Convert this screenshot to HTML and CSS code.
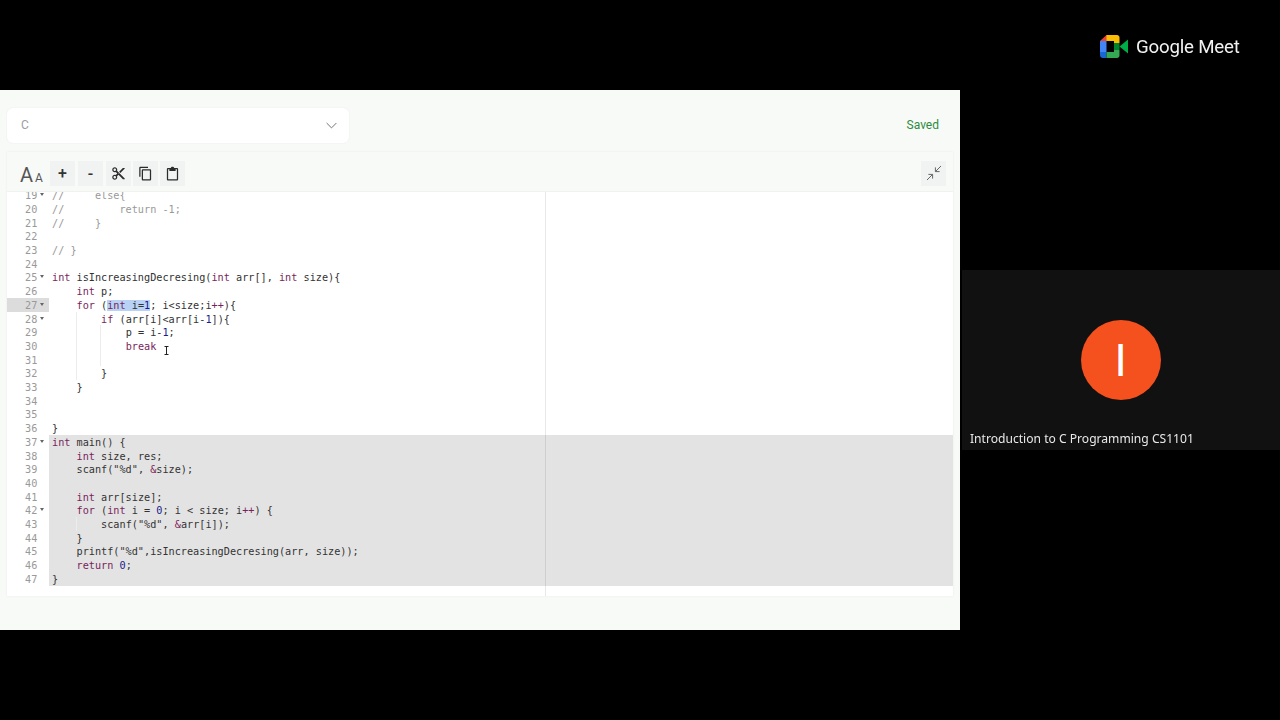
FILE: index.html
```html
<!DOCTYPE html>
<html lang="en">
<head>
<meta charset="utf-8">
<title>Google Meet</title>
<link rel="stylesheet" href="styles.css">
</head>
<body>
<div class="stage">
  <main class="left">
    <div class="sheet">
      <div class="topbar">
        <div class="select"><span>C</span>
          <svg class="chev" width="11" height="7" viewBox="0 0 11 7"><path d="M.6 1l4.900 4.900L10.400 1" fill="none" stroke="#70757a" stroke-width="1"/></svg>
        </div>
        <div class="saved">Saved</div>
      </div>
      <div class="editor">
        <div class="toolbar">
          <div class="aa"><span class="big">A</span><span class="small">A</span></div>
          <button class="tool tool-join">+</button>
          <button class="tool tool-minus">-</button>
          <button class="tool"><svg width="15" height="15" viewBox="0 0 24 24"><path fill="#2b2b2b" d="M9.640 7.640c.23-.5.36-1.050.36-1.640 0-2.210-1.790-4-4-4S2 3.790 2 6s1.790 4 4 4c.59 0 1.140-.13 1.640-.36L10 12l-2.360 2.360C7.140 14.130 6.590 14 6 14c-2.210 0-4 1.790-4 4s1.790 4 4 4 4-1.790 4-4c0-.59-.13-1.140-.36-1.640L12 14l7 7h3v-1L9.640 7.640zM6 8c-1.100 0-2-.89-2-2s.9-2 2-2 2 .89 2 2-.9 2-2 2zm0 12c-1.100 0-2-.89-2-2s.9-2 2-2 2 .89 2 2-.9 2-2 2zm6-7.500c-.28 0-.5-.22-.5-.5s.22-.5.5-.5.5.22.5.5-.22.5-.5.5zM19 3l-6 6 2 2 7-7V3h-3z"/></svg></button>
          <button class="tool"><svg width="15" height="15" viewBox="0 0 24 24"><path fill="#2b2b2b" d="M16 1H4c-1.100 0-2 .9-2 2v14h2V3h12V1zm3 4H8c-1.100 0-2 .9-2 2v14c0 1.100.9 2 2 2h11c1.100 0 2-.9 2-2V7c0-1.100-.9-2-2-2zm0 16H8V7h11v14z"/></svg></button>
          <button class="tool"><svg width="15" height="15" viewBox="0 0 24 24"><path fill="#2b2b2b" d="M19 3h-4.180C14.400 1.840 13.300 1 12 1s-2.400.84-2.820 2H5c-1.100 0-2 .9-2 2v16c0 1.100.9 2 2 2h14c1.100 0 2-.9 2-2V5c0-1.100-.9-2-2-2zm0 18H5V5h2v3h10V5h2v16z"/></svg></button>
          <button class="tool tool-end"><svg width="18" height="18" viewBox="0 0 18 18"><path d="M16 2l-5.600 5.600M10.400 3.400v4.200h4.200M2 16l5.600-5.600M7.600 14.600v-4.200H3.400" fill="none" stroke="#666" stroke-width="1"/></svg></button>
        </div>
        <div class="code">
          <div class="gutter">
            <div class="g fold">19</div><div class="g">20</div><div class="g">21</div><div class="g">22</div><div class="g">23</div><div class="g">24</div><div class="g fold">25</div><div class="g">26</div><div class="g fold active">27</div><div class="g fold">28</div><div class="g">29</div><div class="g">30</div><div class="g">31</div><div class="g">32</div><div class="g">33</div><div class="g">34</div><div class="g">35</div><div class="g">36</div><div class="g fold">37</div><div class="g">38</div><div class="g">39</div><div class="g">40</div><div class="g">41</div><div class="g fold">42</div><div class="g">43</div><div class="g">44</div><div class="g">45</div><div class="g">46</div><div class="g">47</div>
          </div>
          <div class="lines">
            <div class="margin"></div>
            <div class="l c">//     else{</div>
            <div class="l c">//         return -1;</div>
            <div class="l c">//     }</div>
            <div class="l"></div>
            <div class="l c">// }</div>
            <div class="l"></div>
            <div class="l"><b>int</b> isIncreasingDecresing(<b>int</b> arr[], <b>int</b> size){</div>
            <div class="l">    <b>int</b> p;</div>
            <div class="l">    <b>for</b> (<span class="sel"><b>int</b> i=<i>1</i></span>; i&lt;size;i<b>++</b>){</div>
            <div class="l">    <span class="ind">    </span><b>if</b> (arr[i]&lt;arr[i-<i>1</i>]){</div>
            <div class="l">    <span class="ind">    </span><span class="ind">    </span>p = i-<i>1</i>;</div>
            <div class="l">    <span class="ind">    </span><span class="ind">    </span><b>break</b> </div>
            <div class="l">    <span class="ind">    </span><span class="ind">    </span></div>
            <div class="l">    <span class="ind">    </span>}</div>
            <div class="l">    }</div>
            <div class="l"></div>
            <div class="l"></div>
            <div class="l">}</div>
            <div class="l hl"><b>int</b> main() {</div>
            <div class="l hl">    <b>int</b> size, res;</div>
            <div class="l hl">    scanf(<u>"%d"</u>, <b>&amp;</b>size);</div>
            <div class="l hl"></div>
            <div class="l hl">    <b>int</b> arr[size];</div>
            <div class="l hl">    <b>for</b> (<b>int</b> i = <i>0</i>; i &lt; size; i<b>++</b>) {</div>
            <div class="l hl">    <span class="ind">    </span>scanf(<u>"%d"</u>, <b>&amp;</b>arr[i]);</div>
            <div class="l hl">    }</div>
            <div class="l hl">    printf(<u>"%d"</u>,isIncreasingDecresing(arr, size));</div>
            <div class="l hl">    <b>return</b> <i>0</i>;</div>
            <div class="l hl">}</div>
            <svg class="cursor" width="5" height="9" viewBox="0 0 5 9"><path d="M.5 .5h4M.5 8.500h4M2.500 .5v8" stroke="#222" stroke-width="1" fill="none"/></svg>
          </div>
        </div>
      </div>
    </div>
  </main>
  <aside class="right">
    <div class="brand">
      <svg class="logo" width="28" height="23" viewBox="0 0 28 23">
        <path fill="#ea4335" d="M6.500 0H13v6H0z"/>
        <path fill="#4285f4" d="M0 6h6.500v11H0z"/>
        <path fill="#1967d2" d="M0 17h6.500v6H3c-1.700 0-3-1.300-3-3z"/>
        <path fill="#fbbc04" d="M6.500 0H17c1.400 0 2.500 1.100 2.500 2.500V8L14 8V6H6.500z"/>
        <path fill="#34a853" d="M6.500 17H14v-2l5.500 0v5.500c0 1.400-1.100 2.500-2.500 2.500H6.500z"/>
        <path fill="#00832d" d="M14 8h5.500v7H14z"/>
        <path fill="#00ac47" d="M19.500 11.500l8.500-7v14z"/>
      </svg>
      <span class="wordmark">Google Meet</span>
    </div>
    <div class="tile">
      <div class="avatar"><span>I</span></div>
      <div class="name">Introduction to C Programming CS1101</div>
    </div>
  </aside>
</div>
</body>
</html>
```
FILE: styles.css
```css
* { box-sizing: border-box; }
html, body { margin: 0; height: 100%; background: #000; overflow: hidden; }
.stage { display: flex; width: 1280px; height: 720px; filter: blur(.35px); }
.left { width: 960px; height: 720px; padding-top: 90px; flex: none; }
.sheet { height: 540px; background: #f8faf8; padding: 17px 7px 0 7px; display: flex; flex-direction: column; }
.topbar { display: flex; align-items: center; justify-content: space-between; height: 36px; }
.select { width: 342px; height: 35px; background: #fff; border-radius: 6px; box-shadow: 0 0 2px rgba(0,0,0,.07); display: flex; align-items: center; justify-content: space-between; padding: 0 12px 0 14px; font: 12px Roboto, sans-serif; color: #9aa0a0; }
.saved { font: 12px Roboto, sans-serif; color: #2e8b3d; padding-right: 14px; }
.editor { margin-top: 9px; width: 946px; height: 444px; background: #fff; box-shadow: 0 0 2px rgba(0,0,0,.07); display: flex; flex-direction: column; }
.toolbar { height: 40px; flex: none; background: #f8faf8; border-bottom: 1px solid #f0f2f0; display: flex; align-items: center; padding: 3px 7px 0 14px; gap: 2px; }
.aa { width: 27px; color: #555; font-family: Roboto, sans-serif; display: flex; align-items: baseline; padding-top: 3px; margin-left: -1px; margin-right: 1px; }
.big { font-size: 20px; }
.small { font-size: 12px; margin-left: 2px; }
.tool { width: 25px; height: 25px; border: 0; padding: 0; background: #f0f3f1; display: flex; align-items: center; justify-content: center; font: 500 16px Roboto, sans-serif; color: #333; }
.tool-join { margin-right: 1px; }
.tool-minus { margin-right: 1px; }
.tool-end { margin-left: auto; }
.code { flex: 1; display: flex; overflow: hidden; position: relative; }
.gutter { width: 42px; flex: none; margin-top: -3.8px; background: #fff; }
.g { height: 13.71px; font: 10.2px/15.5px "DejaVu Sans Mono", monospace; color: #999; padding-left: 18px; position: relative; }
.g.active { background: #dcdcdc; }
.g.fold::after { content: ""; position: absolute; left: 33px; top: 5px; border: 2.2px solid transparent; border-top: 3px solid #666; border-bottom: 0; }
.lines { flex: 1; margin-top: -3.8px; position: relative; }
.l { height: 13.71px; font: 10.2px/15.5px "DejaVu Sans Mono", monospace; color: #333; white-space: pre; padding-left: 3px; }
.l b { font-weight: 400; color: #7a1f5c; }
.l i { font-style: normal; color: #1a1a8c; }
.l u { text-decoration: none; color: #333; }
.l.c { color: #999; }
.hl { background: #e3e3e3; }
.sel { background: #b8d2f5; }
.ind { display: inline-block; height: 13.71px; box-shadow: -1px 0 0 #ececec; vertical-align: top; }
.margin { position: absolute; left: 496px; top: 0; bottom: -20px; width: 1px; background: rgba(0,0,0,.09); z-index: 2; }
.cursor { position: absolute; left: 114.5px; top: 158px; }
.right { flex: 1; position: relative; display: flex; flex-direction: column; }
.brand { height: 270px; display: flex; align-items: flex-start; padding: 35px 0 0 140px; gap: 8px; }
.wordmark { font: 400 18.7px Roboto, sans-serif; color: #f1f1f1; letter-spacing: -.2px; line-height: 24px; }
.tile { height: 180px; margin-left: 2px; background: #111; position: relative; display: flex; flex-direction: column; align-items: center; padding-top: 50px; }
.avatar { width: 80px; height: 80px; border-radius: 50%; background: #f4511e; display: flex; align-items: center; justify-content: center; color: #fff; font: 400 45px Roboto, sans-serif; margin-left: -1px; }
.name { position: absolute; left: 8px; bottom: 3px; font: 12.1px/16px "Noto Sans", sans-serif; color: #e8e8e8; }
```
